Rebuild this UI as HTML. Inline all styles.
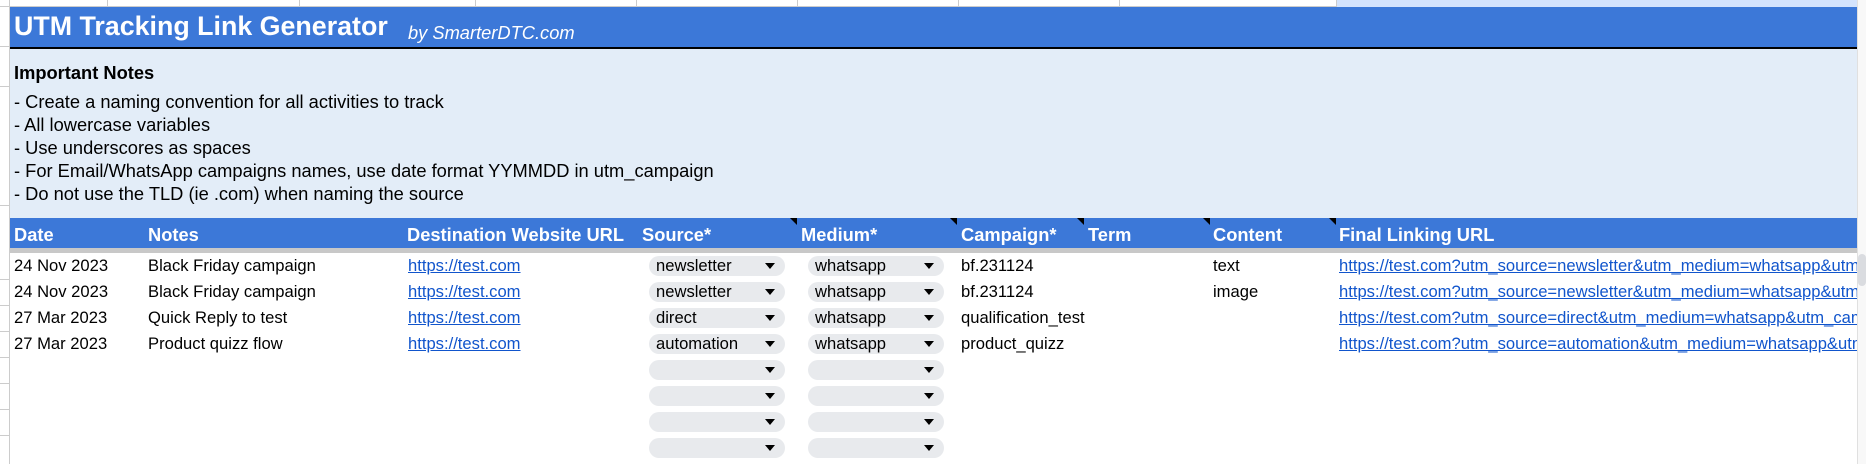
<!DOCTYPE html>
<html><head><meta charset="utf-8">
<style>
*{margin:0;padding:0;box-sizing:border-box}
body{width:1866px;height:464px;overflow:hidden;background:#fff;font-family:"Liberation Sans",Arial,sans-serif;position:relative}
.a{position:absolute;white-space:nowrap}
.hdr{position:absolute;top:218px;height:30px;left:10px;width:1847px;background:#3c78d8}
.h{position:absolute;top:224px;color:#fff;font-weight:bold;font-size:18.3px;white-space:nowrap}
.tri{position:absolute;top:218px;width:0;height:0;border-top:7px solid #000;border-left:7px solid transparent}
.c{position:absolute;font-size:16.6px;color:#000;white-space:nowrap}
.l{color:#1155cc;text-decoration:underline}
.chip{position:absolute;height:20px;border-radius:10px;background:#e8eaed;font-size:16.6px;line-height:20px;padding-left:7px;color:#000}
.chip:after{content:"";position:absolute;right:10px;top:7px;border-top:6px solid #000;border-left:5px solid transparent;border-right:5px solid transparent}
</style></head><body>
<div class="a" style="left:0;top:0;width:1866px;height:7px;background:#fff;border-bottom:1px solid #ccc"></div>
<div class="a" style="left:1336px;top:0;width:521px;height:7px;background:#d3e3fd"></div>
<div class="a" style="left:107px;top:0;width:1px;height:7px;background:#ccc"></div>
<div class="a" style="left:299px;top:0;width:1px;height:7px;background:#ccc"></div>
<div class="a" style="left:475px;top:0;width:1px;height:7px;background:#ccc"></div>
<div class="a" style="left:636px;top:0;width:1px;height:7px;background:#ccc"></div>
<div class="a" style="left:797px;top:0;width:1px;height:7px;background:#ccc"></div>
<div class="a" style="left:958px;top:0;width:1px;height:7px;background:#ccc"></div>
<div class="a" style="left:1119px;top:0;width:1px;height:7px;background:#ccc"></div>
<div class="a" style="left:1336px;top:0;width:1px;height:7px;background:#ccc"></div>
<div class="a" style="left:9px;top:0;width:1px;height:464px;background:#ccc"></div>
<div class="a" style="left:0;top:46px;width:9px;height:1px;background:#ccc"></div>
<div class="a" style="left:0;top:86px;width:9px;height:1px;background:#ccc"></div>
<div class="a" style="left:0;top:205px;width:9px;height:1px;background:#ccc"></div>
<div class="a" style="left:0;top:279px;width:9px;height:1px;background:#ccc"></div>
<div class="a" style="left:0;top:305px;width:9px;height:1px;background:#ccc"></div>
<div class="a" style="left:0;top:331px;width:9px;height:1px;background:#ccc"></div>
<div class="a" style="left:0;top:357px;width:9px;height:1px;background:#ccc"></div>
<div class="a" style="left:0;top:383px;width:9px;height:1px;background:#ccc"></div>
<div class="a" style="left:0;top:409px;width:9px;height:1px;background:#ccc"></div>
<div class="a" style="left:0;top:435px;width:9px;height:1px;background:#ccc"></div>
<div class="a" style="left:10px;top:7px;width:1847px;height:40px;background:#3c78d8"></div>
<div class="a" style="left:10px;top:47px;width:1847px;height:2px;background:#000"></div>
<div class="a" style="left:14px;top:11px;color:#fff;font-weight:bold;font-size:26.8px">UTM Tracking Link Generator</div>
<div class="a" style="left:408px;top:22px;color:#fff;font-style:italic;font-size:18.3px">by SmarterDTC.com</div>
<div class="a" style="left:10px;top:49px;width:1847px;height:169px;background:#e3edf8"></div>
<div class="a" style="left:14px;top:62px;font-weight:bold;font-size:18.3px">Important Notes</div>
<div class="a" style="left:14px;top:90px;font-size:18.3px;line-height:23px">- Create a naming convention for all activities to track<br>- All lowercase variables<br>- Use underscores as spaces<br>- For Email/WhatsApp campaigns names, use date format YYMMDD in utm_campaign<br>- Do not use the TLD (ie .com) when naming the source</div>
<div class="hdr"></div>
<div class="h" style="left:14px">Date</div>
<div class="h" style="left:148px">Notes</div>
<div class="h" style="left:407px">Destination Website URL</div>
<div class="h" style="left:642px">Source*</div>
<div class="h" style="left:801px">Medium*</div>
<div class="h" style="left:961px">Campaign*</div>
<div class="h" style="left:1088px">Term</div>
<div class="h" style="left:1213px">Content</div>
<div class="h" style="left:1339px">Final Linking URL</div>
<div class="tri" style="left:790px"></div>
<div class="tri" style="left:950px"></div>
<div class="tri" style="left:1077px"></div>
<div class="tri" style="left:1203px"></div>
<div class="tri" style="left:1329px"></div>
<div class="a" style="left:10px;top:248px;width:1847px;height:5px;background:#c8c8c8"></div>
<div class="a" style="left:1857px;top:0;width:9px;height:464px;background:#f8f8f8;border-left:1px solid #e0e0e0"></div>
<div class="a" style="left:1858px;top:254px;width:8px;height:32px;background:#dadce0;border-radius:4px"></div>
<div class="c" style="left:14px;top:256px">24 Nov 2023</div>
<div class="c" style="left:14px;top:282px">24 Nov 2023</div>
<div class="c" style="left:14px;top:308px">27 Mar 2023</div>
<div class="c" style="left:14px;top:334px">27 Mar 2023</div>
<div class="c" style="left:148px;top:256px">Black Friday campaign</div>
<div class="c" style="left:148px;top:282px">Black Friday campaign</div>
<div class="c" style="left:148px;top:308px">Quick Reply to test</div>
<div class="c" style="left:148px;top:334px">Product quizz flow</div>
<div class="c l" style="left:408px;top:256px">https://test.com</div>
<div class="c l" style="left:408px;top:282px">https://test.com</div>
<div class="c l" style="left:408px;top:308px">https://test.com</div>
<div class="c l" style="left:408px;top:334px">https://test.com</div>
<div class="chip" style="left:649px;top:256px;width:136px">newsletter</div>
<div class="chip" style="left:649px;top:282px;width:136px">newsletter</div>
<div class="chip" style="left:649px;top:308px;width:136px">direct</div>
<div class="chip" style="left:649px;top:334px;width:136px">automation</div>
<div class="chip" style="left:649px;top:360px;width:136px"></div>
<div class="chip" style="left:649px;top:386px;width:136px"></div>
<div class="chip" style="left:649px;top:412px;width:136px"></div>
<div class="chip" style="left:649px;top:438px;width:136px"></div>
<div class="chip" style="left:808px;top:256px;width:136px">whatsapp</div>
<div class="chip" style="left:808px;top:282px;width:136px">whatsapp</div>
<div class="chip" style="left:808px;top:308px;width:136px">whatsapp</div>
<div class="chip" style="left:808px;top:334px;width:136px">whatsapp</div>
<div class="chip" style="left:808px;top:360px;width:136px"></div>
<div class="chip" style="left:808px;top:386px;width:136px"></div>
<div class="chip" style="left:808px;top:412px;width:136px"></div>
<div class="chip" style="left:808px;top:438px;width:136px"></div>
<div class="c" style="left:961px;top:256px">bf.231124</div>
<div class="c" style="left:961px;top:282px">bf.231124</div>
<div class="c" style="left:961px;top:308px">qualification_test</div>
<div class="c" style="left:961px;top:334px">product_quizz</div>
<div class="c" style="left:1213px;top:256px">text</div>
<div class="c" style="left:1213px;top:282px">image</div>
<div class="a" style="left:1339px;top:253px;width:518px;height:110px;overflow:hidden">
<div class="c l" style="left:0;top:3px">https://test.com?utm_source=newsletter&amp;utm_medium=whatsapp&amp;utm_campaign=bf.231124</div>
<div class="c l" style="left:0;top:29px">https://test.com?utm_source=newsletter&amp;utm_medium=whatsapp&amp;utm_campaign=bf.231124</div>
<div class="c l" style="left:0;top:55px">https://test.com?utm_source=direct&amp;utm_medium=whatsapp&amp;utm_campaign=qualification_test</div>
<div class="c l" style="left:0;top:81px">https://test.com?utm_source=automation&amp;utm_medium=whatsapp&amp;utm_campaign=product_quizz</div>
</div>
</body></html>
